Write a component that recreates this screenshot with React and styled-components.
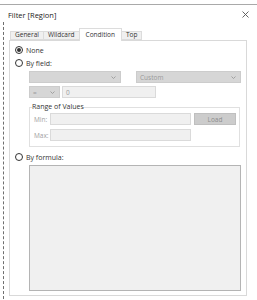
import React from "react";
import styled, { createGlobalStyle } from "styled-components";

const GlobalStyle = createGlobalStyle`
  html, body {
    margin: 0;
    padding: 0;
    background: #ffffff;
  }
  body {
    font-family: "Open Sans", "Noto Sans", "Liberation Sans", sans-serif;
    font-size: 7px;
    color: #333333;
  }
  * {
    box-sizing: border-box;
  }
`;

const tabs = ["General", "Wildcard", "Condition", "Top"];

function Chevron() {
  return (
    <svg width="5" height="3" viewBox="0 0 5 3">
      <path d="M0.5 0.5 L2.5 2.5 L4.5 0.5" fill="none" stroke="#9a9a9a" strokeWidth="0.9" />
    </svg>
  );
}

function CloseIcon() {
  return (
    <svg width="7" height="7" viewBox="0 0 7 7">
      <path d="M0.5 0.5 L6.5 6.5 M6.5 0.5 L0.5 6.5" stroke="#555" strokeWidth="0.9" />
    </svg>
  );
}

export default function App() {
  return (
    <>
      <GlobalStyle />
      <Frame>
        <TitleBar>
          <Title>Filter [Region]</Title>
          <CloseButton>
            <CloseIcon />
          </CloseButton>
        </TitleBar>
        <TabStrip>
          {tabs.map((tab) => (
            <Tab key={tab} $active={tab === "Condition"}>
              {tab}
            </Tab>
          ))}
        </TabStrip>
        <Panel>
          <RadioRow $top={4}>
            <Radio $checked />
            <RadioLabel>None</RadioLabel>
          </RadioRow>
          <RadioRow $top={3}>
            <Radio />
            <RadioLabel>By field:</RadioLabel>
          </RadioRow>
          <FieldRow $top={3}>
            <Select $width={92}>
              <span />
              <Chevron />
            </Select>
            <Select $width={105} $gap={15}>
              <span>Custom</span>
              <Chevron />
            </Select>
          </FieldRow>
          <FieldRow $top={3}>
            <Select $width={31}>
              <span>=</span>
              <Chevron />
            </Select>
            <TextBox $width={94} $gap={2}>
              0
            </TextBox>
          </FieldRow>
          <Group>
            <Legend>Range of Values</Legend>
            <GroupRow>
              <DimLabel>Min:</DimLabel>
              <TextBox $width={141} />
              <LoadButton>Load</LoadButton>
            </GroupRow>
            <GroupRow $top={4}>
              <DimLabel>Max:</DimLabel>
              <TextBox $width={141} />
            </GroupRow>
          </Group>
          <RadioRow $top={5}>
            <Radio />
            <RadioLabel>By formula:</RadioLabel>
          </RadioRow>
          <Formula />
        </Panel>
      </Frame>
    </>
  );
}

const Frame = styled.div`
  width: 257px;
  height: 300px;
  margin-top: 4px;
  padding-left: 3px;
  border-top: 1px solid #a9a9a9;
  position: relative;
  display: flex;
  flex-direction: column;
  &::before {
    content: "";
    display: block;
    position: absolute;
    left: 3px;
    top: 17px;
    bottom: 0;
    border-left: 1px dashed #6f6f6f;
  }
`;

const TitleBar = styled.div`
  height: 23px;
  display: flex;
  align-items: center;
  justify-content: space-between;
  padding: 0 7px 4px 5px;
`;

const Title = styled.div`
  font-size: 7.5px;
  color: #222222;
`;

const CloseButton = styled.div`
  width: 9px;
  height: 9px;
  display: flex;
  align-items: center;
  justify-content: center;
`;

const TabStrip = styled.div`
  height: 12px;
  display: flex;
  align-items: flex-end;
  padding-left: 7px;
  position: relative;
  z-index: 1;
`;

const Tab = styled.div`
  height: ${(p) => (p.$active ? "13px" : "9px")};
  margin-bottom: ${(p) => (p.$active ? "-1px" : "0")};
  padding: 0 ${(p) => (p.$active ? "6px" : "4px")};
  display: flex;
  align-items: center;
  justify-content: center;
  background: ${(p) => (p.$active ? "#ffffff" : "#f0f0f0")};
  border: 1px solid #dcdcdc;
  border-bottom: ${(p) => (p.$active ? "none" : "1px solid #dcdcdc")};
  margin-right: -1px;
  color: #333333;
  font-size: 6.5px;
  line-height: 1;
`;

const Panel = styled.div`
  margin-left: 6px;
  width: 238px;
  height: 256px;
  border: 1px solid #d9d9d9;
  background: #ffffff;
  display: flex;
  flex-direction: column;
  padding-left: 5px;
`;

const RadioRow = styled.div`
  height: 10px;
  margin-top: ${(p) => p.$top || 0}px;
  display: flex;
  align-items: center;
  gap: 3px;
`;

const Radio = styled.div`
  width: 8px;
  height: 8px;
  border-radius: 50%;
  border: 1px solid #333333;
  background: #ffffff;
  display: flex;
  align-items: center;
  justify-content: center;
  &::after {
    content: "";
    width: 4px;
    height: 4px;
    border-radius: 50%;
    background: ${(p) => (p.$checked ? "#333333" : "transparent")};
  }
`;

const RadioLabel = styled.span`
  font-size: 7px;
  color: #333333;
`;

const FieldRow = styled.div`
  margin-top: ${(p) => p.$top || 0}px;
  margin-left: 14px;
  display: flex;
  height: 12px;
`;

const Select = styled.div`
  width: ${(p) => p.$width}px;
  margin-left: ${(p) => p.$gap || 0}px;
  height: 12px;
  background: #d6d6d6;
  border: 1px solid #cccccc;
  display: flex;
  align-items: center;
  justify-content: space-between;
  padding: 0 4px 0 3px;
  color: #9a9a9a;
  font-size: 6.5px;
`;

const TextBox = styled.div`
  width: ${(p) => p.$width}px;
  margin-left: ${(p) => p.$gap || 0}px;
  height: 12px;
  background: #f0f0f0;
  border: 1px solid #dadada;
  display: flex;
  align-items: center;
  padding-left: 3px;
  color: #9a9a9a;
  font-size: 6.5px;
`;

const Group = styled.fieldset`
  margin: 5px 0 0 14px;
  padding: 0 0 3px 4px;
  width: 211px;
  height: 44px;
  border: 1px solid #e0e0e0;
  min-width: 0;
`;

const Legend = styled.legend`
  padding: 0;
  margin-left: -2px;
  font-size: 7px;
  color: #333333;
  line-height: 8px;
`;

const GroupRow = styled.div`
  display: flex;
  align-items: center;
  height: 12px;
  margin-top: ${(p) => p.$top || 2}px;
`;

const DimLabel = styled.span`
  width: 16px;
  color: #a0a0a0;
  font-size: 6.5px;
`;

const LoadButton = styled.div`
  width: 42px;
  height: 12px;
  margin-left: 3px;
  background: #cccccc;
  border: 1px solid #bfbfbf;
  display: flex;
  align-items: center;
  justify-content: center;
  color: #8c8c8c;
  font-size: 6.5px;
`;

const Formula = styled.div`
  margin: 3px 0 0 14px;
  width: 212px;
  height: 126px;
  background: #f0f0f0;
  border: 1px solid #b4b4b4;
`;
